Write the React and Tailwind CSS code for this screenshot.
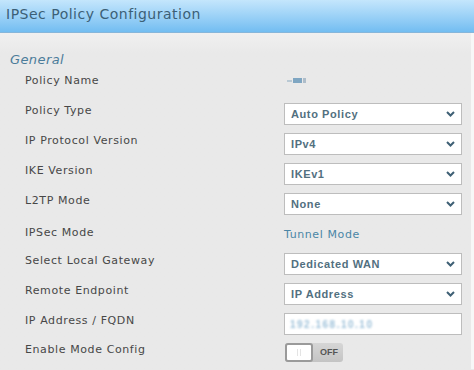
import React from 'react'

const ROWS = [
  { label: 'Policy Type', type: 'select', value: 'Auto Policy' },
  { label: 'IP Protocol Version', type: 'select', value: 'IPv4' },
  { label: 'IKE Version', type: 'select', value: 'IKEv1' },
  { label: 'L2TP Mode', type: 'select', value: 'None' },
  { label: 'IPSec Mode', type: 'text', value: 'Tunnel Mode' },
  { label: 'Select Local Gateway', type: 'select', value: 'Dedicated WAN' },
  { label: 'Remote Endpoint', type: 'select', value: 'IP Address' },
  { label: 'IP Address / FQDN', type: 'input', value: '192.168.10.10' },
]

function Chevron() {
  return (
    <svg width="9" height="6" viewBox="0 0 9 6" className="shrink-0">
      <polyline points="1,1 4.5,4.5 8,1" fill="none" stroke="#3f6075" strokeWidth="2" />
    </svg>
  )
}

function Select({ value }) {
  return (
    <div className="w-[178px] h-[22px] bg-white border border-[#bdbdbd] flex items-center justify-between pl-[6px] pr-[6px]">
      <span className="font-['Liberation_Sans',Arial,sans-serif] font-bold text-[11px] tracking-[0.6px] text-[#52707f]">{value}</span>
      <Chevron />
    </div>
  )
}

function Label({ children, className = '' }) {
  return (
    <div className={`w-[284px] shrink-0 pl-[25px] text-[11px] leading-[14px] tracking-[0.6px] text-[#474747] ${className}`}>{children}</div>
  )
}

export default function App() {
  return (
    <div className="w-[474px] h-[370px] overflow-hidden bg-[#e9e9e9] font-['DejaVu_Sans',sans-serif]">
      {/* header */}
      <div className="h-[33px] bg-gradient-to-b from-[#c4e6fc] to-[#72bdf1] border-b border-[#86b6da] pl-[6px] pt-[2px]">
        <span className="text-[14px] leading-[20px] tracking-[0.5px] text-[#3c5f76]">IPSec Policy Configuration</span>
      </div>

      <div className="flex h-[336px]">
        <div className="w-[471px] bg-gradient-to-b from-[#f0f0f0] to-[#e9e9e9] to-[6%]">
          <div className="pl-[10px] pt-[19px] text-[13px] leading-[16px] italic tracking-[0.4px] text-[#4b7c9a]">General</div>

          {/* Policy Name */}
          <div className="flex items-start mt-[5px] h-[22px]">
            <Label className="mt-[1px]">Policy Name</Label>
            <div className="flex items-center gap-[1px] mt-[5px] ml-[3px] blur-[0.6px]">
              <div className="w-[5px] h-[2px] bg-[#b9c9d4]" />
              <div className="w-[9px] h-[5px] bg-[#7fa6c2]" />
              <div className="w-[3px] h-[5px] bg-[#aebdca]" />
            </div>
          </div>

          {ROWS.map(r => (
            <div key={r.label} className="flex items-start mt-[8px] h-[22px]">
              <Label className={r.type === 'text' ? 'mt-[3px]' : 'mt-[1px]'}>{r.label}</Label>
              {r.type === 'select' && <Select value={r.value} />}
              {r.type === 'text' && (
                <div className="mt-[5px] text-[11px] leading-[14px] tracking-[0.6px] text-[#4a86a6]">{r.value}</div>
              )}
              {r.type === 'input' && (
                <div className="w-[178px] h-[22px] bg-white border border-[#bdbdbd] flex items-center pl-[5px]">
                  <span className="font-['Liberation_Sans',Arial,sans-serif] font-bold text-[10px] tracking-[1.5px] text-[#9fc2da] blur-[1.2px]">{r.value}</span>
                </div>
              )}
            </div>
          ))}

          {/* Enable Mode Config */}
          <div className="flex items-start mt-[8px]">
            <Label>Enable Mode Config</Label>
            <div className="ml-[1px] w-[58px] h-[19px] rounded-[3px] bg-gradient-to-b from-[#d6d6d6] to-[#c4c4c4] flex items-center">
              <div className="w-[28px] h-[19px] bg-white border-2 border-[#9a9a9a] rounded-[3px] flex items-center justify-center">
                <div className="w-[4px] h-[7px] border-l border-r border-[#e4e4e4]" />
              </div>
              <span className="ml-[7px] font-['Liberation_Sans',Arial,sans-serif] font-bold text-[9px] text-[#555]">OFF</span>
            </div>
          </div>
        </div>
        <div className="w-[3px] bg-[#f7f7f7]" />
      </div>
    </div>
  )
}
